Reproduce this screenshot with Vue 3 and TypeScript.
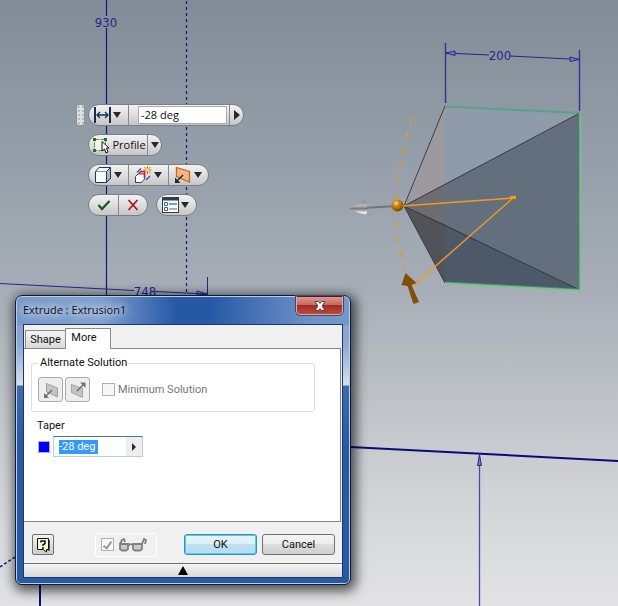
<script setup lang="ts">
import { ref } from 'vue'

type Tab = 'Shape' | 'More'

const tabs: Tab[] = ['Shape', 'More']
const activeTab = ref<Tab>('More')
const taper = ref('-28 deg')
const minimumSolution = ref(false)
const preview = ref(true)
</script>

<template>
  <main class="viewport">
    <svg class="scene" width="618" height="606" viewBox="0 0 618 606" aria-hidden="true">
      <defs>
        <linearGradient id="cone" x1="0" y1="0" x2="0" y2="1">
          <stop offset="0" stop-color="#85858a" />
          <stop offset="0.35" stop-color="#b9b9bd" />
          <stop offset="0.55" stop-color="#77777b" />
          <stop offset="0.8" stop-color="#ececef" />
          <stop offset="1" stop-color="#a9a9ad" />
        </linearGradient>
        <radialGradient id="ball" cx="0.38" cy="0.3" r="0.7">
          <stop offset="0" stop-color="#ffe2a0" />
          <stop offset="0.3" stop-color="#dc9010" />
          <stop offset="1" stop-color="#7a4700" />
        </radialGradient>
      </defs>

      <!-- sketch dimensions -->
      <g stroke="#15157c" fill="none">
        <path d="M106.500 0V16M106.500 28V300" stroke-width="1.2" />
        <path d="M186.500 1V300" stroke-width="1.2" stroke-dasharray="3 3" />
        <path d="M0 283.500L134 290.500M155 291.500L207 294M207.500 277V300M197 291L207 294L197 295Z" stroke="#26268a" />
        <path d="M350 447L618 461" stroke="#0a0a78" stroke-width="2" />
        <path d="M479.500 454V606" stroke="#4a4aa4" stroke-width="1.3" />
        <path d="M479.500 455L477.500 465.500H481.500Z" fill="#7a7ab4" stroke="#26268a" />
        <path d="M40 575V606" stroke="#0a0a78" stroke-width="2" />
        <path d="M0 567L18 555" stroke-dasharray="3 2" stroke-width="1.5" />
        <path d="M445.500 43V103M579.500 50V111" stroke="#34348c" stroke-width="1.4" />
        <path d="M446 53L489 55M510 56L579 59.500" stroke="#26268a" stroke-width="1.2" />
        <path d="M446 53L455 51V55.500ZM579 59.500L570 57V61.500Z" fill="#7c7cb0" stroke="#26268a" />
      </g>
      <g class="dimension">
        <text x="106" y="27">930</text>
        <text x="145" y="296">748</text>
        <text x="500" y="60">200</text>
      </g>

      <!-- extruded solid -->
      <path d="M445 106V184L404 206Z" fill="#9c999f" />
      <path d="M445 106L580 113L445 184Z" fill="#8f9baa" />
      <path d="M404 206L445 184V224Z" fill="#6c6c72" />
      <path d="M445 184L580 113V290L445 224Z" fill="#636f7d" />
      <path d="M404 206L445 224V283Z" fill="#515359" />
      <path d="M445 224L580 290L445 283Z" fill="#4d5969" />
      <path d="M445 106L404 206L445 283M404 206L580 113M404 206L580 290" fill="none" stroke="#303642" stroke-width="0.9" />
      <path d="M445 106.500L580 113" stroke="#58a384" stroke-width="2" />
      <path d="M580 113V290L445 283" fill="none" stroke="#75c77c" stroke-width="2" />
      <path d="M579 113V289L446 282" fill="none" stroke="#3d8591" stroke-width="0.8" />

      <!-- taper manipulator -->
      <path d="M412 118Q384 206 405 268" fill="none" stroke="#d89a39" stroke-width="1.6" stroke-dasharray="7 8" />
      <path d="M402 206L513 198L414 285" fill="none" stroke="#f29a1c" stroke-width="1.4" />
      <rect x="510" y="196" width="6" height="3" fill="#f99a10" />
      <path d="M397 206L363 208" stroke="#737378" stroke-width="2" />
      <path d="M349 209L365 200.500Q369 208 366 215.500Z" fill="url(#cone)" />
      <circle cx="397.500" cy="205.500" r="6" fill="url(#ball)" />
      <path d="M405.500 273L416.500 283L411.500 285L419 302L413.500 304L407.500 286L401.500 285Z" fill="#805006" />
    </svg>

    <section class="mini" aria-label="Extrude toolbar">
      <div class="mini-row">
        <span class="grip"></span>
        <div class="pill">
          <button class="seg wide" aria-label="Distance mode">
            <svg width="17" height="18" viewBox="0 0 17 18">
              <path d="M1 1V17M16 1V17" stroke="#172c4e" stroke-width="2" />
              <path d="M3 9H14M6 6L3 9L6 12M11 6L14 9L11 12" fill="none" stroke="#172c4e" stroke-width="1.3" />
            </svg>
            <i class="down"></i>
          </button>
          <span class="field"><input v-model="taper" aria-label="Taper angle" /></span>
          <button class="seg end" aria-label="More values"><i class="right"></i></button>
        </div>
      </div>

      <div class="mini-row">
        <div class="pill">
          <button class="seg profile">
            <svg width="18" height="18" viewBox="0 0 18 18">
              <path d="M2.500 3.500H13.500V14.500H2.500Z" fill="#f2f6ef" stroke="#55a04b" stroke-dasharray="5 1" />
              <path d="M1 2h3v3H1zM12 2h3v3h-3zM1 13h3v3H1z" fill="#256b20" />
              <path d="M10 5.500V15L12.500 13L14 17L16 16L14.500 12H17Z" fill="#fff" stroke="#111" />
            </svg>
            Profile
          </button>
          <button class="seg end" aria-label="Profile options"><i class="down"></i></button>
        </div>
      </div>

      <div class="mini-row">
        <div class="pill">
          <button class="seg wide" aria-label="Output">
            <svg width="18" height="18" viewBox="0 0 18 18">
              <path d="M1.500 5.500L5 1.500H16.500V12L12.500 16.500H1.500Z" fill="#f7f9fb" stroke="#23364f" stroke-linejoin="round" />
              <path d="M12.500 5.500L16.500 1.500V12L12.500 16.500Z" fill="#a9b9c8" stroke="#23364f" />
              <path d="M2 5.500H12" stroke="#8394a7" />
            </svg>
            <i class="down"></i>
          </button>
          <button class="seg wide" aria-label="Operation">
            <svg width="18" height="18" viewBox="0 0 18 18">
              <path d="M1.500 10.500L4 8H10.500V13L7.500 16.500H1.500Z" fill="#fff" stroke="#2f4057" />
              <path d="M3 6.500L7 2.500M12 14L16 10" stroke="#2469bd" stroke-width="1.5" />
              <path d="M5 7.500L7 5.500H10.500V12" fill="none" stroke="#cb2020" stroke-width="1.600" />
              <path d="M13.500 0V8M9.500 4H17.500M10.500 1L16.500 7M16.500 1L10.500 7" stroke="#dc6515" />
              <circle cx="13.500" cy="4" r="1.800" fill="#ffdf67" />
            </svg>
            <i class="down"></i>
          </button>
          <button class="seg wide" aria-label="Direction">
            <svg width="18" height="18" viewBox="0 0 18 18">
              <path d="M2.500 1.500L15.500 5.500V16L2.500 10.500Z" fill="#f5b487" stroke="#c76625" stroke-width="1.3" />
              <path d="M9 9L3 15" fill="none" stroke="#222a38" stroke-width="1.500" />
              <path d="M1 17V11.500L6.500 17Z" fill="#222a38" />
            </svg>
            <i class="down"></i>
          </button>
        </div>
      </div>

      <div class="mini-row">
        <div class="pill">
          <button class="seg narrow" aria-label="Accept">
            <svg width="14" height="14" viewBox="0 0 14 14"><path d="M1.500 7L5 11L12.500 3" fill="none" stroke="#165b17" stroke-width="2.200" /></svg>
          </button>
          <button class="seg narrow" aria-label="Discard">
            <svg width="14" height="14" viewBox="0 0 14 14"><path d="M2.500 2L11.500 12M11.500 2L2.500 12" stroke="#ae1620" stroke-width="1.800" /></svg>
          </button>
        </div>
        <div class="pill">
          <button class="seg wide" aria-label="Options">
            <svg width="17" height="18" viewBox="0 0 17 18">
              <rect x="0.500" y="1.500" width="16" height="15" fill="#fff" stroke="#303d50" />
              <path d="M1 3H16" stroke="#303d50" stroke-width="3" />
              <path d="M2.500 6.500h3v3h-3z" fill="#fff" stroke="#2576c8" />
              <path d="M2.500 11.500h3v3h-3z" fill="#fff" stroke="#59616c" />
              <path d="M7 8H15" stroke="#2989dd" stroke-width="1.500" />
              <path d="M7 13H15" stroke="#59616c" />
            </svg>
            <i class="down"></i>
          </button>
        </div>
      </div>
    </section>

    <section class="dialog" role="dialog" aria-labelledby="dialog-title">
      <header class="titlebar">
        <h1 id="dialog-title">Extrude : Extrusion1</h1>
        <button class="close" aria-label="Close">
          <svg width="12" height="10" viewBox="0 0 12 10">
            <path d="M1 .5H4.500L6 2.500L7.500 .5H11L8 5L11 9.500H7.500L6 7.500L4.500 9.500H1L4 5Z" fill="#fff" stroke="#59474e" />
          </svg>
        </button>
      </header>

      <div class="client">
        <div class="tabs" role="tablist">
          <button
            v-for="tab in tabs"
            :key="tab"
            role="tab"
            class="tab"
            :class="{ active: tab === activeTab }"
            :aria-selected="tab === activeTab"
            @click="activeTab = tab"
          >{{ tab }}</button>
        </div>

        <div class="panel">
          <fieldset class="group">
            <legend>Alternate Solution</legend>
            <div class="solution">
              <button class="tool" disabled aria-label="Alternate direction one">
                <svg width="18" height="18" viewBox="0 0 18 18">
                  <path d="M4.500 2.500L15.500 7V16L4.500 11Z" fill="#c4c4c4" stroke="#a2a2a2" />
                  <path d="M10 9L4 15" fill="none" stroke="#707070" stroke-width="1.600" />
                  <path d="M2 17V12L7 17Z" fill="#707070" />
                </svg>
              </button>
              <button class="tool" disabled aria-label="Alternate direction two">
                <svg width="18" height="18" viewBox="0 0 18 18">
                  <path d="M2.500 3.500L13.500 7.500V16.500L2.500 11.500Z" fill="#c4c4c4" stroke="#a2a2a2" />
                  <path d="M8 10L14 4" fill="none" stroke="#707070" stroke-width="1.600" />
                  <path d="M11 1.500H16.500V7Z" fill="#707070" />
                </svg>
              </button>
              <label class="minimum">
                <input v-model="minimumSolution" class="tick" type="checkbox" disabled />
                Minimum Solution
              </label>
            </div>
          </fieldset>

          <label class="taper-label" for="taper">Taper</label>
          <div class="taper-row">
            <span class="swatch"></span>
            <div class="combo">
              <span class="selected"><input id="taper" v-model="taper" /></span>
              <button class="combo-more" aria-label="Taper values"><i class="right small"></i></button>
            </div>
          </div>
        </div>

        <footer class="actions">
          <button class="help" aria-label="Help">
            <svg width="15" height="16" viewBox="0 0 15 16">
              <path d="M1.500 1.500H12.500V12.500H10.500V15L7 12.500H1.500Z" fill="#ffffc4" stroke="#111" />
              <path d="M13.500 3V13.500H11.500" fill="none" stroke="#555" />
              <path d="M5 5.500V4H9V6.500L7 8V9M7 10V12" fill="none" stroke="#10106c" stroke-width="1.600" />
            </svg>
          </button>
          <label class="preview">
            <input v-model="preview" class="tick" type="checkbox" disabled aria-label="Preview" />
            <svg width="28" height="14" viewBox="0 0 28 14">
              <path d="M1 6H9V11L7 12.500H3L1 11ZM14 6H23V11L21 12.500H16L14 11Z" fill="#cacaca" stroke="#808080" stroke-width="1.800" />
              <path d="M9 8L11 6L14 7M1 6L3 2L5 1L6 4M23 6L25 1L27 2L26 6" fill="none" stroke="#808080" stroke-width="1.800" />
            </svg>
          </label>
          <button class="push primary">OK</button>
          <button class="push">Cancel</button>
        </footer>

        <button class="expander" aria-label="Collapse dialog">
          <svg width="10" height="9" viewBox="0 0 10 9"><path d="M5 0L10 9H0Z" fill="#000" /></svg>
        </button>
      </div>
    </section>
  </main>
</template>

<style>
body {
  margin: 0;
}
</style>

<style scoped>
* {
  box-sizing: border-box;
}

.viewport {
  position: relative;
  min-height: 100vh;
  overflow: hidden;
  background: linear-gradient(#818c98 0%, #929ca6 22%, #a7aeb7 48%, #b7bcc2 60%, #c8cbcf 74%, #d8d9db 88%, #e2e2e4 100%);
  font: 11px/16px "Open Sans", "Noto Sans", sans-serif;
  color: #111;
}

button,
input {
  margin: 0;
  padding: 0;
  font: inherit;
  color: inherit;
}

svg {
  display: block;
  flex: none;
}

.scene {
  position: absolute;
  top: 0;
  left: 0;
}

.dimension {
  fill: #25258c;
  font: 13px "DejaVu Sans Condensed", "DejaVu Sans", sans-serif;
  text-anchor: middle;
}

/* floating toolbar */
.mini {
  position: absolute;
  top: 104px;
  left: 76px;
  display: grid;
  gap: 8px;
}

.mini-row {
  display: flex;
  gap: 8px;
  padding-left: 12px;
}

.mini-row:first-child {
  gap: 3px;
  padding-left: 0;
}

.grip {
  width: 9px;
  height: 22px;
  border: 1px solid #8d9196;
  border-radius: 3px;
  background: radial-gradient(circle, #bbb 1px, transparent 1px) 0 0 / 4px 4px, #e0e0e0;
}

.pill {
  display: flex;
  height: 22px;
  overflow: hidden;
  border: 1px solid #7b7f83;
  border-radius: 11px;
  background: linear-gradient(#f2f2f2, #dedede 50%, #c6c6c6);
}

.seg {
  display: flex;
  align-items: center;
  justify-content: center;
  gap: 2px;
  border: 0;
  background: none;
}

.seg + .seg,
.field,
.field + .seg {
  border-left: 1px solid #85898d;
}

.wide {
  justify-content: flex-start;
  width: 40px;
  padding-left: 5px;
}

.wide:first-child {
  width: 39px;
}

.narrow {
  width: 29px;
}

.end {
  width: 14px;
}

.profile {
  width: 58px;
  padding-left: 2px;
}

.field {
  display: flex;
  width: 101px;
  padding: 1px 2px 1px 9px;
}

.field input {
  width: 100%;
  padding-left: 2px;
  border: 1px solid #aaa;
  background: #fff;
}

.down {
  border: 4px solid transparent;
  border-top: 6px solid #282828;
  border-bottom: 0;
}

.right {
  border: 5px solid transparent;
  border-left: 6px solid #282828;
  border-right: 0;
}

.right.small {
  border-width: 4px 0 4px 4px;
}

/* dialog window */
.dialog {
  position: absolute;
  top: 295px;
  left: 15px;
  width: 336px;
  padding: 0 7px 6px;
  border: 1px solid #0c1c33;
  border-radius: 7px 7px 6px 6px;
  background: linear-gradient(90deg, #7798c9 0, #7fa0cf 25%, #2658a6 48%, #2658a6 58%, #6e91c8 88%, #7598cc 100%) 0 0 / 100% 29px no-repeat,
    linear-gradient(#7799cc 0, #8faad2 50px, #d6e1f0 89px, #3d6bae 90px, #285aa4 150px, #285aa4 100%);
  box-shadow: inset 0 0 0 1px #b7cde8, 2px 3px 12px 3px rgb(0 0 0 / 65%);
  font-family: Roboto, "Open Sans", sans-serif;
}

.titlebar {
  display: flex;
  justify-content: space-between;
  height: 28px;
}

.titlebar h1 {
  margin: 0;
  padding-top: 1px;
  font: 400 11px/26px "Open Sans", "Noto Sans", sans-serif;
  text-shadow: 0 0 6px #dce8f8, 0 0 10px #dce8f8, 0 0 14px #c5d8f0;
}

.close {
  display: flex;
  align-items: center;
  justify-content: center;
  width: 47px;
  height: 19px;
  border: 1px solid #dca9a8;
  border-top: 1px solid #4b1b25;
  border-radius: 0 0 5px 5px;
  background: linear-gradient(#d99a93, #c8665c 46%, #a02c22 50%, #c0493d);
  box-shadow: 0 0 0 1px #41496a;
}

.client {
  border: 1px solid #1c3864;
  background: #f0f0f0;
}

.tabs {
  display: flex;
  align-items: flex-end;
  height: 23px;
  padding-left: 1px;
}

.tab {
  width: 40px;
  height: 18px;
  border: 1px solid #8b8c90;
  border-bottom: 0;
  background: linear-gradient(#f3f3f3, #dadada);
}

.tab.active {
  z-index: 1;
  width: 46px;
  height: 21px;
  margin-bottom: -1px;
  padding-right: 8px;
  padding-bottom: 2px;
  background: #fff;
}

.tab:not(.active) {
  border-right: 0;
}

.panel {
  height: 174px;
  margin-right: 1px;
  padding: 6px 25px 0 7px;
  border: 1px solid #858589;
  border-left: 0;
  background: #fff;
}

.group {
  height: 57px;
  min-width: 0;
  margin: 0;
  padding: 0 6px;
  border: 1px solid #dcdcdf;
  border-radius: 3px;
}

.group legend {
  padding: 0 2px;
}

.solution {
  display: flex;
  align-items: center;
  gap: 2px;
  padding-top: 6px;
}

.tool {
  display: grid;
  place-items: center;
  width: 25px;
  height: 25px;
  border: 1px solid #a9a9a9;
  border-radius: 3px;
  background: #eee;
}

.minimum {
  display: flex;
  align-items: center;
  gap: 3px;
  margin-left: 10px;
  color: #767676;
}

.tick {
  display: grid;
  place-items: center;
  width: 13px;
  height: 13px;
  appearance: none;
  border: 1px solid #b1b1b1;
  background: #f7f7f7;
}

.tick:checked::before {
  width: 3px;
  height: 7px;
  border: solid #999;
  border-width: 0 2px 2px 0;
  content: "";
  rotate: 35deg;
}

.taper-label {
  display: block;
  margin-top: 6px;
  padding-left: 6px;
}

.taper-row {
  display: flex;
  align-items: center;
  gap: 3px;
  padding-top: 2px;
  padding-left: 7px;
}

.swatch {
  width: 12px;
  height: 12px;
  border: 1px solid #aaaaf5;
  background: #0000f2;
}

.combo {
  display: flex;
  width: 90px;
  height: 21px;
  border: 1px solid #b4d0e2;
  border-top-color: #4b7595;
}

.selected {
  display: flex;
  flex: 1;
  align-items: center;
  padding-left: 5px;
}

.selected input {
  width: 39px;
  height: 14px;
  border: 0;
  background: #3399ff;
  color: #fff;
}

.combo-more {
  display: grid;
  place-items: center;
  width: 16px;
  border: 0;
  background: #eee;
}

.actions {
  display: flex;
  align-items: center;
  height: 41px;
  padding: 4px 7px 0 8px;
}

.help {
  display: grid;
  place-items: center;
  width: 22px;
  height: 21px;
  border: 1px solid #707070;
  border-radius: 2px;
  background: linear-gradient(#f3f3f3, #ccc);
}

.preview {
  display: flex;
  align-items: center;
  gap: 5px;
  width: 62px;
  height: 24px;
  margin-right: auto;
  margin-left: 41px;
  padding-left: 5px;
  border: 1px solid #fff;
  border-radius: 3px;
}

.push {
  width: 73px;
  height: 21px;
  border: 1px solid #707070;
  border-radius: 3px;
  background: linear-gradient(#f4f4f4, #ebebeb 49%, #ddd 50%, #cfcfcf);
}

.push + .push {
  margin-left: 5px;
}

.primary {
  border-color: #3c8db5;
  background: linear-gradient(#eaf4fa, #ddeef8 49%, #c2dff0 50%, #b8dcf0);
  box-shadow: inset 0 0 0 1px #43d2f5;
}

.expander {
  display: grid;
  place-items: center;
  width: 100%;
  height: 14px;
  border: 0;
  border-top: 1px solid #707070;
  background: linear-gradient(#f5f5f5, #d8d8d8);
}
</style>
